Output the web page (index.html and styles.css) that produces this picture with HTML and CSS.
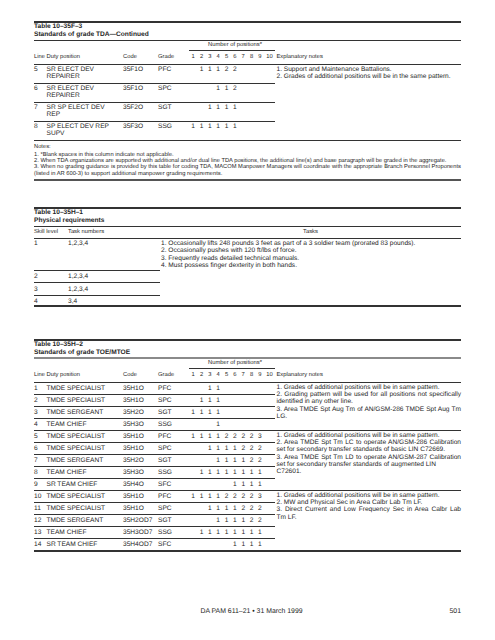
FILE: index.html
```html
<!DOCTYPE html>
<html lang="en">
<head>
<meta charset="utf-8">
<title>DA PAM 611-21</title>
<link rel="stylesheet" href="styles.css">
</head>
<body>
<div class="page">

  <section class="tbl t1">
    <div class="caption">Table 10–35F–3<br>Standards of grade TDA—Continued</div>
    <div class="numhead"><span>Number of positions*</span></div>
    <div class="hdr">
      <div>Line</div><div>Duty position</div><div>Code</div><div>Grade</div>
      <div class="num">1</div><div class="num">2</div><div class="num">3</div><div class="num">4</div><div class="num">5</div><div class="num">6</div><div class="num">7</div><div class="num">8</div><div class="num">9</div><div class="num">10</div>
      <div class="expl">Explanatory notes</div>
    </div>
    <div class="group">
      <div class="rows">
        <div class="row"><div>5</div><div class="duty">SR ELECT DEV REPAIRER</div><div>35F1O</div><div>PFC</div><div class="num f2">1</div><div class="num">1</div><div class="num">1</div><div class="num">2</div><div class="num">2</div></div>
        <div class="row"><div>6</div><div class="duty">SR ELECT DEV REPAIRER</div><div>35F1O</div><div>SPC</div><div class="num f4">1</div><div class="num">1</div><div class="num">2</div></div>
        <div class="row"><div>7</div><div class="duty">SR SP ELECT DEV REP</div><div>35F2O</div><div>SGT</div><div class="num f3">1</div><div class="num">1</div><div class="num">1</div><div class="num">1</div></div>
        <div class="row"><div>8</div><div class="duty">SP ELECT DEV REP SUPV</div><div>35F3O</div><div>SSG</div><div class="num f1">1</div><div class="num">1</div><div class="num">1</div><div class="num">1</div><div class="num">1</div><div class="num">1</div></div>
      </div>
      <div class="notes">
        <p>1. Support and Maintenance Battalions.</p>
        <p>2. Grades of additional positions will be in the same pattern.</p>
      </div>
    </div>
    <div class="tnotes">
      <div>Notes:</div>
      <div class="tnote-list">
        <p>1. *Blank spaces in this column indicate not applicable.</p>
        <p>2. When TDA organizations are supported with additional and/or dual line TDA positions, the additional line(s) and base paragraph will be graded in the aggregate.</p>
        <p>3. When no grading guidance is provided by this table for coding TDA, MACOM Manpower Managers will coordinate with the appropriate Branch Personnel Proponents (listed in AR 600-3) to support additional manpower grading requirements.</p>
      </div>
    </div>
  </section>

  <section class="tbl t2">
    <div class="caption">Table 10–35H–1<br>Physical requirements</div>
    <div class="hdr2">
      <div>Skill level</div><div>Task numbers</div><div class="tasks-h">Tasks</div>
    </div>
    <div class="body2">
      <div class="l first">1</div><div class="l first">1,2,3,4</div>
      <div class="tasks">
        <p>1. Occasionally lifts 248 pounds 3 feet as part of a 3 soldier team (prorated 83 pounds).</p>
        <p>2. Occasionally pushes with 120 ft/lbs of force.</p>
        <p>3. Frequently reads detailed technical manuals.</p>
        <p>4. Must possess finger dexterity in both hands.</p>
      </div>
      <div class="l">2</div><div class="l">1,2,3,4</div><div></div>
      <div class="l">3</div><div class="l">1,2,3,4</div><div></div>
      <div class="l end">4</div><div class="l end">3,4</div><div></div>
    </div>
  </section>

  <section class="tbl t3">
    <div class="caption grey">Table 10–35H–2<br>Standards of grade TOE/MTOE</div>
    <div class="numhead"><span>Number of positions*</span></div>
    <div class="hdr">
      <div>Line</div><div>Duty position</div><div>Code</div><div>Grade</div>
      <div class="num">1</div><div class="num">2</div><div class="num">3</div><div class="num">4</div><div class="num">5</div><div class="num">6</div><div class="num">7</div><div class="num">8</div><div class="num">9</div><div class="num">10</div>
      <div class="expl">Explanatory notes</div>
    </div>

    <div class="group">
      <div class="rows">
        <div class="row"><div>1</div><div>TMDE SPECIALIST</div><div>35H1O</div><div>PFC</div><div class="num f3">1</div><div class="num">1</div></div>
        <div class="row"><div>2</div><div>TMDE SPECIALIST</div><div>35H1O</div><div>SPC</div><div class="num f2">1</div><div class="num">1</div><div class="num">1</div></div>
        <div class="row"><div>3</div><div>TMDE SERGEANT</div><div>35H2O</div><div>SGT</div><div class="num f1">1</div><div class="num">1</div><div class="num">1</div><div class="num">1</div></div>
        <div class="row"><div>4</div><div>TEAM CHIEF</div><div>35H3O</div><div>SSG</div><div class="num f4">1</div></div>
      </div>
      <div class="notes">
        <p>1. Grades of additional positions will be in same pattern.</p>
        <p>2. Grading pattern will be used for all positions not specifically identified in any other line.</p>
        <p>3. Area TMDE Spt Aug Tm of AN/GSM-286 TMDE Spt Aug Tm LG.</p>
      </div>
    </div>

    <div class="group">
      <div class="rows">
        <div class="row"><div>5</div><div>TMDE SPECIALIST</div><div>35H1O</div><div>PFC</div><div class="num f1">1</div><div class="num">1</div><div class="num">1</div><div class="num">1</div><div class="num">2</div><div class="num">2</div><div class="num">2</div><div class="num">2</div><div class="num">3</div></div>
        <div class="row"><div>6</div><div>TMDE SPECIALIST</div><div>35H1O</div><div>SPC</div><div class="num f3">1</div><div class="num">1</div><div class="num">1</div><div class="num">1</div><div class="num">2</div><div class="num">2</div><div class="num">2</div></div>
        <div class="row"><div>7</div><div>TMDE SERGEANT</div><div>35H2O</div><div>SGT</div><div class="num f4">1</div><div class="num">1</div><div class="num">1</div><div class="num">1</div><div class="num">2</div><div class="num">2</div></div>
        <div class="row"><div>8</div><div>TEAM CHIEF</div><div>35H3O</div><div>SSG</div><div class="num f2">1</div><div class="num">1</div><div class="num">1</div><div class="num">1</div><div class="num">1</div><div class="num">1</div><div class="num">1</div><div class="num">1</div></div>
        <div class="row"><div>9</div><div>SR TEAM CHIEF</div><div>35H4O</div><div>SFC</div><div class="num f6">1</div><div class="num">1</div><div class="num">1</div><div class="num">1</div></div>
      </div>
      <div class="notes">
        <p>1. Grades of additional positions will be in same pattern.</p>
        <p>2. Area TMDE Spt Tm LC to operate AN/GSM-286 Calibration set for secondary transfer standards of basic LIN C72669.</p>
        <p>3. Area TMDE Spt Tm LD to operate AN/GSM-287 Calibration set for secondary transfer standards of augmented LIN<br>C72601.</p>
      </div>
    </div>

    <div class="group last">
      <div class="rows">
        <div class="row"><div>10</div><div>TMDE SPECIALIST</div><div>35H1O</div><div>PFC</div><div class="num f1">1</div><div class="num">1</div><div class="num">1</div><div class="num">1</div><div class="num">2</div><div class="num">2</div><div class="num">2</div><div class="num">2</div><div class="num">3</div></div>
        <div class="row"><div>11</div><div>TMDE SPECIALIST</div><div>35H1O</div><div>SPC</div><div class="num f3">1</div><div class="num">1</div><div class="num">1</div><div class="num">1</div><div class="num">2</div><div class="num">2</div><div class="num">2</div></div>
        <div class="row"><div>12</div><div>TMDE SERGEANT</div><div>35H2OD7</div><div>SGT</div><div class="num f4">1</div><div class="num">1</div><div class="num">1</div><div class="num">1</div><div class="num">2</div><div class="num">2</div></div>
        <div class="row"><div>13</div><div>TEAM CHIEF</div><div>35H3OD7</div><div>SSG</div><div class="num f2">1</div><div class="num">1</div><div class="num">1</div><div class="num">1</div><div class="num">1</div><div class="num">1</div><div class="num">1</div><div class="num">1</div></div>
        <div class="row"><div>14</div><div>SR TEAM CHIEF</div><div>35H4OD7</div><div>SFC</div><div class="num f6">1</div><div class="num">1</div><div class="num">1</div><div class="num">1</div></div>
      </div>
      <div class="notes">
        <p>1. Grades of additional positions will be in same pattern.</p>
        <p>2. MW and Physical Sec in Area Calbr Lab Tm LF.</p>
        <p>3. Direct Current and Low Frequency Sec in Area Calbr Lab Tm LF.</p>
      </div>
    </div>
  </section>

  <footer class="footer">
    <div></div>
    <div class="pub">DA PAM 611–21 • 31 March 1999</div>
    <div class="pageno">501</div>
  </footer>
</div>
</body>
</html>
```

FILE: styles.css
```css
* {
  box-sizing: border-box;
  margin: 0;
  padding: 0;
}

body {
  margin: 0;
  background: #ffffff;
  color: #262626;
  font-family: "Liberation Sans", Arial, sans-serif;
  text-rendering: geometricPrecision;
}

.page {
  width: 495px;
  height: 640px;
  padding: 20.5px 34px 0;
}

.tbl {
  border-top: 2px solid #333333;
}

.caption {
  font-weight: bold;
  font-size: 6.6px;
  line-height: 8px;
  padding-bottom: 1px;
  border-bottom: 1px solid #333333;
}

.caption.grey {
  padding-bottom: 0;
  border-bottom: 2px solid #8a8a8a;
}

.numhead {
  padding: 1px 0 0 155px;
  font-size: 5.8px;
  line-height: 7px;
}

.numhead span {
  display: block;
  width: 86px;
  padding: 0 0 1px 6px;
  text-align: center;
  border-bottom: 1px solid #333333;
}

.hdr {
  display: grid;
  grid-template-columns: 12.5px 76.5px 35px 31px repeat(9, 8.35px) 10.85px 1fr;
  font-size: 5.8px;
  line-height: 7px;
  padding: 3px 0;
  border-bottom: 1px solid #333333;
}

.num {
  text-align: center;
}

.expl {
  padding-left: 1.5px;
}

.group {
  display: flex;
  border-bottom: 1px solid #333333;
}

.group.last {
  border-bottom: 2px solid #333333;
}

.rows {
  width: 241px;
  flex: none;
}

.row {
  display: grid;
  grid-template-columns: 12.5px 76.5px 35px 31px repeat(9, 8.35px) 10.85px;
  align-items: start;
  font-size: 6.6px;
  border-bottom: 1px solid #333333;
}

.row:last-child {
  border-bottom: 0;
}

.duty {
  padding-right: 6px;
}

.f1 { grid-column-start: 5; }
.f2 { grid-column-start: 6; }
.f3 { grid-column-start: 7; }
.f4 { grid-column-start: 8; }
.f6 { grid-column-start: 10; }

.notes {
  flex: 1;
  padding-left: 1.5px;
  font-size: 6.58px;
  text-align: justify;
}

/* Table 10-35F-3 */
.t1 .row {
  height: 19px;
  padding-top: 1.5px;
  line-height: 7.2px;
}

.t1 .row:last-child {
  height: 18px;
}

.t1 .notes {
  padding-top: 1.5px;
  line-height: 7.2px;
}

.tnotes {
  font-size: 5.75px;
  line-height: 6.3px;
  padding: 3px 0 2.5px;
  border-bottom: 2px solid #555555;
}

.tnote-list {
  margin-top: 2px;
}

.tnote-list p {
  text-align: justify;
}

/* Table 10-35H-1 */
.t2 {
  margin-top: 25.5px;
}

.hdr2 {
  display: grid;
  grid-template-columns: 34px 92px 1fr;
  font-size: 5.8px;
  line-height: 6.5px;
  padding: 2px 0 3px;
  border-bottom: 1px solid #333333;
}

.tasks-h {
  text-align: center;
}

.body2 {
  display: grid;
  grid-template-columns: 34px 92px 1fr;
  font-size: 6.6px;
  line-height: 7.3px;
  border-bottom: 2px solid #333333;
}

.body2 .l {
  padding: 2.5px 0 1.7px;
  border-bottom: 1px solid #333333;
}

.body2 .l.first {
  padding-top: 0.5px;
}

.body2 .l.end {
  padding-bottom: 0;
  border-bottom: 0;
}

.tasks {
  padding: 0.5px 0 1.5px 1px;
}

/* Table 10-35H-2 */
.t3 {
  margin-top: 31.5px;
}

.t3 .row {
  height: 12px;
  padding-top: 2px;
  line-height: 7px;
}

.t3 .row:last-child {
  height: 11px;
}

.t3 .notes {
  padding-top: 1px;
  line-height: 7.2px;
}

/* Footer */
.footer {
  display: grid;
  grid-template-columns: 1fr auto 1fr;
  margin-top: 55.7px;
  padding-left: 8px;
  font-size: 6.9px;
  line-height: 8px;
}

.pageno {
  text-align: right;
}
```
